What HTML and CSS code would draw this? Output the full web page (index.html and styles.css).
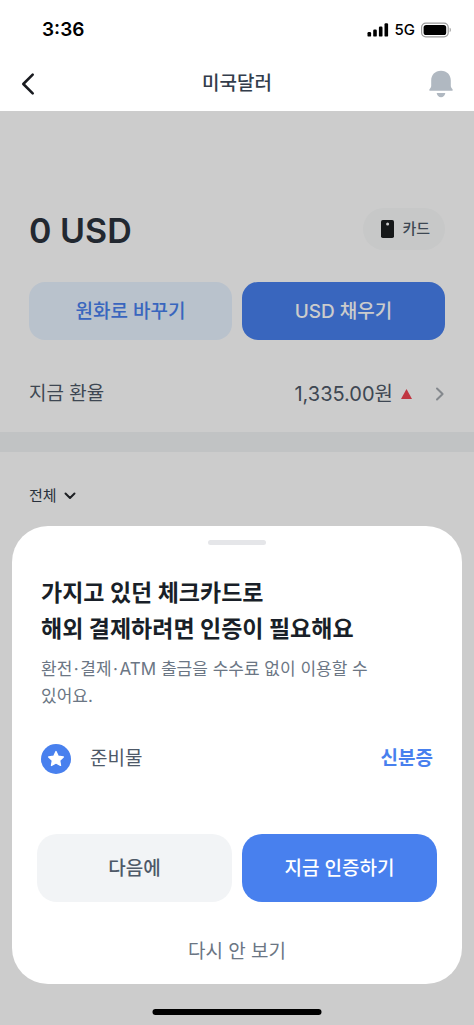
FILE: index.html
```html
<!DOCTYPE html>
<html lang="ko">
<head>
<meta charset="utf-8">
<meta name="viewport" content="width=device-width, initial-scale=1">
<title>미국달러</title>
<link rel="stylesheet" href="styles.css">
</head>
<body>
<div class="status-bar">
  <span class="clock">3:36</span>
  <div class="status-icons">
    <svg width="22" height="14" viewBox="0 0 22 14" aria-hidden="true">
      <rect x="0.5" y="9" width="3.6" height="4.6" rx="1.2"/>
      <rect x="6.2" y="6.6" width="3.6" height="7" rx="1.2"/>
      <rect x="11.9" y="3.6" width="3.6" height="10" rx="1.2"/>
      <rect x="17.5" y="0.3" width="3.6" height="13.3" rx="1.2"/>
    </svg>
    <span class="network">5G</span>
    <svg width="31" height="16" viewBox="0 0 31 16" aria-hidden="true">
      <rect x="0.6" y="1.1" width="26.6" height="13.8" rx="4.2" fill="none" stroke="#9b9b9b" stroke-width="1.2"/>
      <rect x="2.6" y="3" width="22.6" height="10" rx="2.6"/>
      <path d="M28.7 5.8c1.5.5 1.5 3.9 0 4.4z" fill="#9b9b9b"/>
    </svg>
  </div>
</div>
<header class="nav">
  <button class="icon-button" type="button" aria-label="뒤로">
    <svg width="14" height="24" viewBox="0 0 14 24" fill="none" stroke="#191b20" stroke-width="2.6" stroke-linecap="round" stroke-linejoin="round" aria-hidden="true"><path d="M11.7 2.6 2.3 12l9.4 9.4"/></svg>
  </button>
  <h1 class="nav-title">미국달러</h1>
  <button class="icon-button icon-button-end" type="button" aria-label="알림">
    <svg width="24" height="28" viewBox="0 0 24 28" fill="#b0b8c1" aria-hidden="true">
      <path d="M12 .7C5.900.7 2.200 5 2.200 10.500v5.200c0 1.600-.7 2.300-1.500 3.200-.8 1-.4 1.900.6 1.900h21.400c1 0 1.400-.9.6-1.900-.8-.9-1.500-1.600-1.500-3.200v-5.200C21.800 5 18.100.7 12 .7z"/>
      <path d="M7.700 23h8.600c-.3 2.400-2 4.200-4.300 4.200S8 25.400 7.700 23z"/>
    </svg>
  </button>
</header>

<main class="account">
  <section class="summary">
    <div class="balance-row">
      <strong class="balance">0 USD</strong>
      <button class="card-pill" type="button">
        <svg width="13" height="18" viewBox="0 0 13 18" aria-hidden="true"><rect width="13" height="18" rx="1.8" fill="#1c1e20"/><circle cx="6.600" cy="4" r="1.500" fill="#fff"/></svg>
        카드
      </button>
    </div>
    <div class="button-row">
      <button class="button button-soft" type="button">원화로 바꾸기</button>
      <button class="button button-primary" type="button">USD 채우기</button>
    </div>
    <a class="rate-row" href="#rate">
      <span>지금 환율</span>
      <span class="rate-value">1,335.00원
        <svg class="rate-up" width="11" height="10" viewBox="0 0 11 10" fill="#f04452" aria-hidden="true"><path d="M5.500 0 11 10H0z"/></svg>
        <svg width="10" height="14" viewBox="0 0 10 14" fill="none" stroke="#a6abb1" stroke-width="2" stroke-linecap="round" stroke-linejoin="round" aria-hidden="true"><path d="M2 1.500 7.600 7 2 12.500"/></svg>
      </span>
    </a>
  </section>
  <section class="history">
    <button class="filter" type="button">전체
      <svg width="12" height="8" viewBox="0 0 12 8" fill="none" stroke="#25282c" stroke-width="2" stroke-linecap="round" stroke-linejoin="round" aria-hidden="true"><path d="M1.500 1.500 6 6l4.500-4.500"/></svg>
    </button>
  </section>
  <div class="scrim"></div>
</main>

<section class="sheet" role="dialog" aria-labelledby="sheet-title">
  <div class="handle"></div>
  <div class="sheet-body">
    <h2 class="sheet-title" id="sheet-title">가지고 있던 체크카드로<br>해외 결제하려면 인증이 필요해요</h2>
    <p class="sheet-text">환전&hairsp;·&hairsp;결제&hairsp;·&hairsp;ATM 출금을 수수료 없이 이용할 수 있어요.</p>
    <div class="requirement">
      <svg width="30" height="30" viewBox="0 0 30 30" aria-hidden="true"><circle cx="15" cy="15" r="15" fill="#4880ee"/><path d="m15 7.600 2.200 4.600 5.100.7-3.700 3.500.9 5-4.500-2.400-4.500 2.400.9-5-3.700-3.500 5.100-.7z" fill="#fff" stroke="#fff" stroke-width="1.400" stroke-linejoin="round"/></svg>
      <span>준비물</span>
      <strong class="requirement-value">신분증</strong>
    </div>
  </div>
  <div class="button-row">
    <button class="button button-large button-grey" type="button">다음에</button>
    <button class="button button-large button-primary" type="button">지금 인증하기</button>
  </div>
  <button class="dismiss" type="button">다시 안 보기</button>
</section>
<div class="home-indicator"></div>
</body>
</html>
```

FILE: styles.css
```css
* { box-sizing: border-box; }

body {
  position: relative;
  display: flex;
  flex-direction: column;
  min-height: 100vh;
  margin: 0;
  background: #fff;
  color: #4e5968;
  font-family: Inter, "Noto Sans CJK KR", sans-serif;
  font-size: 19px;
  line-height: 24px;
}

button {
  padding: 0;
  border: 0;
  background: none;
  color: inherit;
  font: inherit;
  cursor: pointer;
}

svg { display: block; flex: none; }

.status-bar {
  display: flex;
  align-items: center;
  justify-content: space-between;
  height: 60px;
  padding: 0 22px 0 42px;
  color: #000;
}

.clock { font-size: 19px; font-weight: 600; }
.status-icons { display: flex; align-items: center; gap: 6px; }
.network { font-size: 15px; font-weight: 500; }

.nav {
  display: grid;
  grid-template-columns: 1fr auto 1fr;
  align-items: center;
  height: 51px;
  padding: 0 21px 3px;
}

.icon-button { justify-self: start; }
.icon-button-end { justify-self: end; }

.nav-title {
  margin: 0;
  color: #333d4b;
  font-size: 19px;
  font-weight: 500;
}

.account {
  position: relative;
  flex: 1;
}

.summary {
  padding: 97px 29px 26px;
  border-bottom: 20px solid #f2f4f6;
}

.balance-row {
  display: flex;
  align-items: flex-end;
  justify-content: space-between;
  margin-bottom: 32px;
}

.balance {
  color: #2b323d;
  font-size: 34px;
  font-weight: 600;
  line-height: 38px;
}

.card-pill {
  display: flex;
  align-items: center;
  gap: 8px;
  height: 42px;
  padding: 0 15px 0 18px;
  border-radius: 21px;
  background: #f9fbfb;
  font-size: 15px;
  font-weight: 500;
}

.button-row { display: flex; gap: 10px; }

.button {
  flex: 1;
  height: 58px;
  padding-top: 2px;
  border-radius: 16px;
  font-weight: 500;
}

.button-soft { background: #e8f3ff; color: #4880ee; }
.button-primary { background: #4880ee; color: #fff; }

.rate-row {
  display: flex;
  justify-content: space-between;
  margin-top: 42px;
  color: inherit;
  text-decoration: none;
}

.rate-value {
  display: flex;
  align-items: center;
  gap: 8px;
  font-size: 20px;
}

.rate-up { margin-right: 15px; }

.history { padding: 32px 29px; }

.filter {
  display: flex;
  align-items: center;
  gap: 7px;
  color: #333d4b;
  font-size: 15px;
}

.scrim {
  position: absolute;
  inset: 0;
  background: rgba(0, 0, 0, 0.2);
}

.sheet {
  position: absolute;
  right: 12px;
  bottom: 41px;
  left: 12px;
  display: flex;
  flex-direction: column;
  padding: 14px 25px 20px;
  border-radius: 36px;
  background: #fff;
}

.handle {
  align-self: center;
  width: 58px;
  height: 5px;
  border-radius: 3px;
  background: #e5e6e9;
}

.sheet-body { padding: 30px 4px 60px; }

.sheet-title {
  margin: 0;
  color: #191f28;
  font-size: 23px;
  font-weight: 700;
  line-height: 36px;
}

.sheet-text {
  max-width: 340px;
  margin: 9px 0 34px;
  color: #6b7684;
  font-size: 17px;
  line-height: 27px;
  word-break: keep-all;
}

.requirement { display: flex; align-items: center; gap: 19px; }

.requirement-value {
  margin-left: auto;
  color: #4880ee;
  font-weight: 700;
}

.button-large { height: 68px; border-radius: 20px; }
.button-grey { background: #f2f4f6; }

.dismiss {
  align-self: center;
  margin-top: 38px;
  color: #6b7684;
}

.home-indicator {
  position: absolute;
  bottom: 10px;
  left: 50%;
  width: 169px;
  height: 6px;
  border-radius: 3px;
  background: #000;
  transform: translateX(-50%);
}
```
